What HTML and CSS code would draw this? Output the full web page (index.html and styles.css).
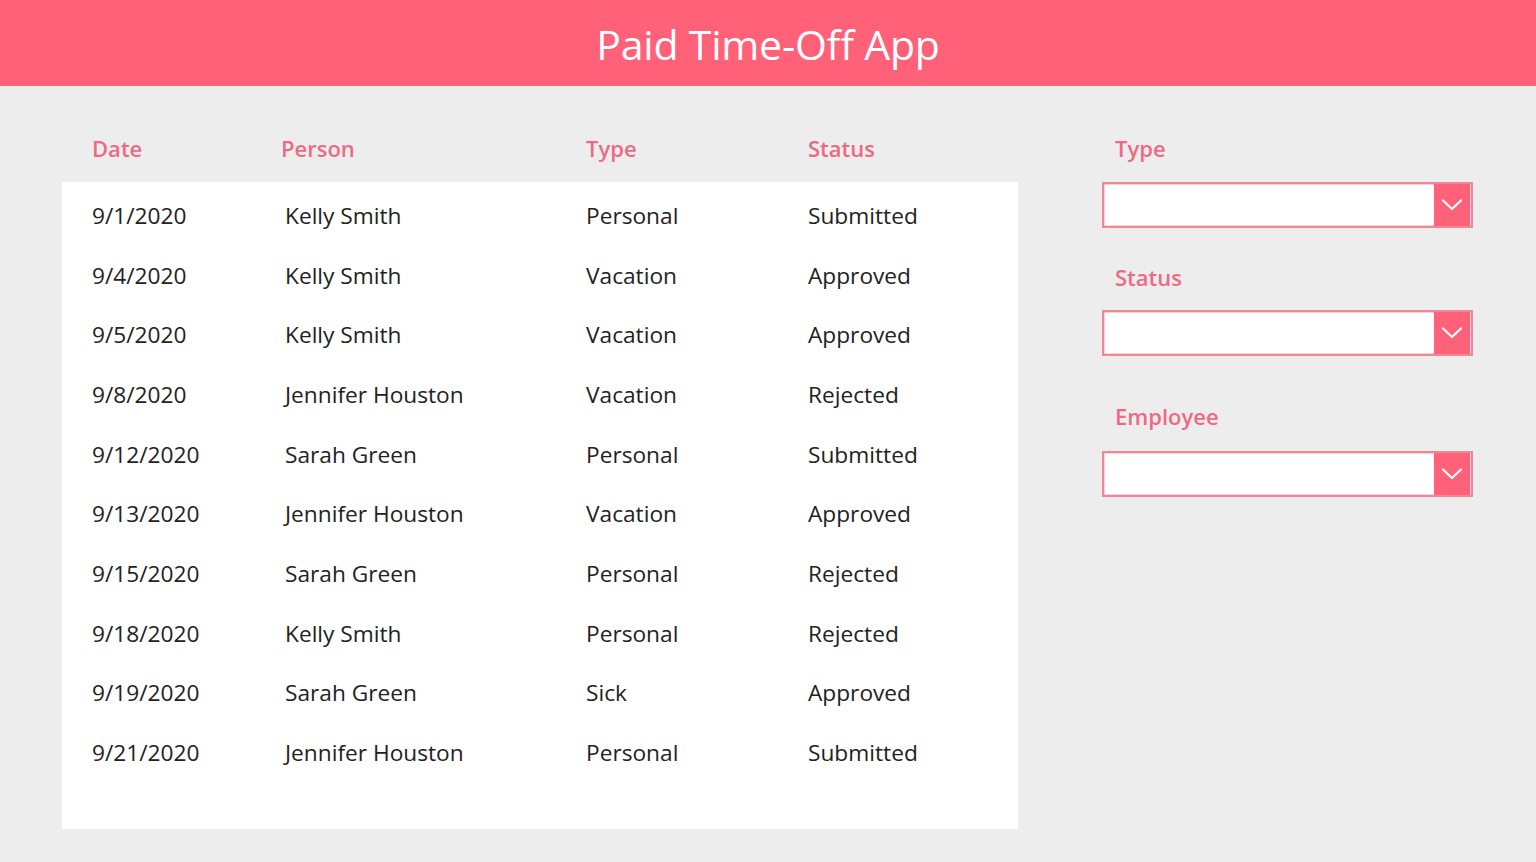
FILE: index.html
```html
<!DOCTYPE html>
<html lang="en">
<head>
<meta charset="utf-8">
<title>Paid Time-Off App</title>
<link rel="stylesheet" href="styles.css">
</head>
<body>
<header class="app-header">
  <h1 class="app-title">Paid Time-Off App</h1>
</header>
<main class="main">
  <section class="table-wrap">
    <div class="thead">
      <div class="th">Date</div>
      <div class="th">Person</div>
      <div class="th">Type</div>
      <div class="th">Status</div>
    </div>
    <div class="tbody">
      <div class="tr"><div>9/1/2020</div><div>Kelly Smith</div><div>Personal</div><div>Submitted</div></div>
      <div class="tr"><div>9/4/2020</div><div>Kelly Smith</div><div>Vacation</div><div>Approved</div></div>
      <div class="tr"><div>9/5/2020</div><div>Kelly Smith</div><div>Vacation</div><div>Approved</div></div>
      <div class="tr"><div>9/8/2020</div><div>Jennifer Houston</div><div>Vacation</div><div>Rejected</div></div>
      <div class="tr"><div>9/12/2020</div><div>Sarah Green</div><div>Personal</div><div>Submitted</div></div>
      <div class="tr"><div>9/13/2020</div><div>Jennifer Houston</div><div>Vacation</div><div>Approved</div></div>
      <div class="tr"><div>9/15/2020</div><div>Sarah Green</div><div>Personal</div><div>Rejected</div></div>
      <div class="tr"><div>9/18/2020</div><div>Kelly Smith</div><div>Personal</div><div>Rejected</div></div>
      <div class="tr"><div>9/19/2020</div><div>Sarah Green</div><div>Sick</div><div>Approved</div></div>
      <div class="tr"><div>9/21/2020</div><div>Jennifer Houston</div><div>Personal</div><div>Submitted</div></div>
    </div>
  </section>
  <aside class="filters">
    <div class="filter filter-type">
      <div class="filter-label">Type</div>
      <div class="dropdown">
        <div class="dropdown-value"></div>
        <div class="dropdown-btn"><svg width="22" height="14" viewBox="0 0 22 14"><path d="M2 2.5 L11 11 L20 2.5" fill="none" stroke="#fff" stroke-width="2.2" stroke-linecap="round" stroke-linejoin="round"/></svg></div>
      </div>
    </div>
    <div class="filter filter-status">
      <div class="filter-label">Status</div>
      <div class="dropdown">
        <div class="dropdown-value"></div>
        <div class="dropdown-btn"><svg width="22" height="14" viewBox="0 0 22 14"><path d="M2 2.5 L11 11 L20 2.5" fill="none" stroke="#fff" stroke-width="2.2" stroke-linecap="round" stroke-linejoin="round"/></svg></div>
      </div>
    </div>
    <div class="filter filter-employee">
      <div class="filter-label">Employee</div>
      <div class="dropdown">
        <div class="dropdown-value"></div>
        <div class="dropdown-btn"><svg width="22" height="14" viewBox="0 0 22 14"><path d="M2 2.5 L11 11 L20 2.5" fill="none" stroke="#fff" stroke-width="2.2" stroke-linecap="round" stroke-linejoin="round"/></svg></div>
      </div>
    </div>
  </aside>
</main>
</body>
</html>
```
FILE: styles.css
```css
* { box-sizing: border-box; }
html, body { margin: 0; padding: 0; }
body {
  width: 1536px;
  height: 862px;
  overflow: hidden;
  background: #ededed;
  font-family: "Open Sans", "Noto Sans", "Liberation Sans", sans-serif;
  color: #222;
}
.app-header {
  height: 86px;
  background: #ff6179;
  display: flex;
  align-items: center;
  justify-content: center;
}
.app-title {
  margin: 0;
  color: #fff;
  font-weight: 400;
  font-size: 41px;
  line-height: 46px;
  padding-top: 2px;
  letter-spacing: -0.2px;
}
.main {
  display: flex;
  gap: 84px;
  padding-left: 62px;
}
.table-wrap {
  width: 956px;
}
.thead {
  height: 96px;
  padding: 47px 0 0 30px;
  display: grid;
  grid-template-columns: 189px 305px 222px 1fr;
}
.th, .filter-label {
  color: #ee6a84;
  font-weight: 600;
  font-size: 22px;
  line-height: 30px;
}
.tbody {
  background: #fff;
  height: 647px;
  padding-top: 4px;
}
.tr {
  height: 59.7px;
  display: grid;
  grid-template-columns: 193px 301px 222px 1fr;
  align-items: center;
  padding-left: 30px;
  font-size: 22.7px;
  line-height: 30px;
}
.filters {
  width: 371px;
  padding-top: 47px;
}
.filter-label {
  padding-left: 13px;
}
.filter-status { margin-top: 34px; }
.filter-employee { margin-top: 45px; }
.filter-type .dropdown { margin-top: 19px; }
.filter-status .dropdown { margin-top: 18px; }
.filter-employee .dropdown { margin-top: 20px; }
.dropdown {
  height: 46px;
  background: #fff;
  border: 2px solid #f0869a;
  display: flex;
  box-shadow: inset 0 0 0 1px #fbd0d8;
}
.dropdown-value { flex: 1; }
.dropdown-btn {
  width: 36px;
  margin-right: 1px;
  background: #ff6179;
  display: flex;
  align-items: center;
  justify-content: center;
}
```
